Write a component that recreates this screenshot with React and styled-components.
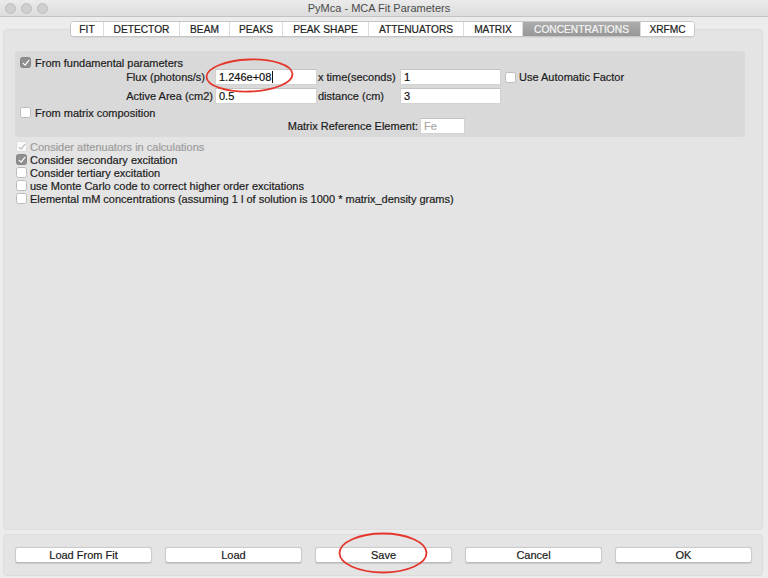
import React from "react";
import styled, { createGlobalStyle } from "styled-components";

const Global = createGlobalStyle`
  html, body { margin: 0; padding: 0; background: #ececec; }
  body {
    font-family: "Liberation Sans", Arial, sans-serif;
    font-size: 11px;
    color: #1c1c1c;
    -webkit-text-stroke: 0.2px currentColor;
  }
  * { box-sizing: border-box; }
`;

const Window = styled.div`
  position: relative;
  width: 768px;
  height: 578px;
  background: #ececec;
  display: flex;
  flex-direction: column;
  overflow: hidden;
`;

const TitleBar = styled.div`
  height: 17px;
  flex: none;
  display: flex;
  align-items: center;
  position: relative;
  background: linear-gradient(#ebebeb, #dcdcdc);
  border-bottom: 1px solid #c4c4c4;
`;

const Lights = styled.div`
  display: flex;
  gap: 5px;
  padding-left: 5px;
`;

const Light = styled.span`
  width: 11px;
  height: 11px;
  border-radius: 50%;
  background: #cfcfcf;
  border: 1px solid #bdbdbd;
`;

const Title = styled.div`
  flex: 1;
  text-align: center;
  color: #4a4a4a;
  font-size: 11px;
  margin-right: 58px;
  -webkit-text-stroke: 0;
`;

const Body = styled.div`
  flex: 1;
  display: flex;
  flex-direction: column;
  padding: 4px 5px 2px 3px;
`;

const TabBar = styled.div`
  align-self: flex-start;
  margin-left: 67px;
  display: flex;
  height: 16px;
  border: 1px solid #c6c6c6;
  border-radius: 4px;
  background: #fff;
  overflow: hidden;
  position: relative;
  z-index: 1;
  margin-bottom: -8px;
  box-shadow: 0 1px 1px rgba(0,0,0,0.06);
`;

const Tab = styled.div`
  width: ${p => p.w}px;
  display: flex;
  align-items: center;
  justify-content: center;
  font-size: 10.2px;
  color: ${p => (p.active ? "#f6f6f6" : "#222")};
  background: ${p => (p.active ? "linear-gradient(#acacac, #979797)" : "#fff")};
  border-left: ${p => (p.first ? "none" : "1px solid #dcdcdc")};
`;

const Panel = styled.div`
  height: 501px;
  background: #e4e4e4;
  border: 1px solid #dcdcdc;
  border-radius: 4px;
  padding: 21px 17px 0 11px;
  display: flex;
  flex-direction: column;
`;

const Group = styled.div`
  background: #d9d9d9;
  border-radius: 4px;
  padding: 5px 5px 3px 5px;
  display: flex;
  flex-direction: column;
`;

const CheckRow = styled.label`
  display: flex;
  align-items: center;
  height: 13px;
  gap: ${p => p.gap || 3}px;
  margin-top: ${p => p.mt || 0}px;
  color: ${p => (p.disabled ? "#9d9d9d" : "#1c1c1c")};
  white-space: nowrap;
`;

const Box = styled.span`
  width: 11px;
  height: 11px;
  flex: none;
  border-radius: 2.5px;
  display: flex;
  align-items: center;
  justify-content: center;
  background: ${p => (p.checked && !p.disabled ? "#8f8f8f" : "#fff")};
  border: 1px solid ${p => (p.checked && !p.disabled ? "#878787" : p.disabled ? "#dadada" : "#bcbcbc")};
  opacity: ${p => (p.disabled ? 0.85 : 1)};
`;

const FieldGrid = styled.div`
  display: grid;
  grid-template-columns: 195px 102px 83px 101px auto;
  row-gap: 3px;
  align-items: center;
`;

const Label = styled.div`
  text-align: ${p => p.align || "right"};
  padding-right: ${p => p.pr || 0}px;
  padding-left: ${p => p.pl || 0}px;
  white-space: nowrap;
`;

const Input = styled.div`
  height: 16px;
  width: ${p => p.w || "auto"};
  background: #fff;
  border: 1px solid #d2d2d2;
  border-top-color: #c4c4c4;
  display: flex;
  align-items: center;
  padding-left: 3px;
  color: ${p => (p.placeholder ? "#a8a8a8" : "#111")};
`;

const Caret = styled.span`
  display: inline-block;
  width: 1px;
  height: 12px;
  background: #111;
  margin-left: 1px;
`;

const AutoCell = styled.div`
  padding-left: 4px;
`;

const RefRow = styled.div`
  display: flex;
  align-items: center;
  gap: 2px;
  margin-top: -1px;
`;

const RefLabel = styled.div`
  width: 398px;
  text-align: right;
`;

const OptionList = styled.div`
  display: flex;
  flex-direction: column;
  padding: 3px 0 0 1px;
`;

const ButtonPanel = styled.div`
  margin-top: 4px;
  height: 42px;
  background: #e4e4e4;
  border: 1px solid #dcdcdc;
  border-radius: 4px;
  display: grid;
  grid-template-columns: repeat(5, 137px);
  column-gap: 13px;
  align-items: center;
  padding: 0 11px;
`;

const Button = styled.div`
  height: 16px;
  background: #fff;
  border: 1px solid #cbcbcb;
  border-bottom-color: #bcbcbc;
  border-radius: 3px;
  display: flex;
  align-items: center;
  justify-content: center;
  color: #1a1a1a;
  box-shadow: 0 0.5px 1px rgba(0,0,0,0.12);
`;

const Annotation = styled.svg`
  position: absolute;
  left: 0;
  top: 0;
  pointer-events: none;
`;

const Check = ({ checked, disabled }) => (
  <Box checked={checked} disabled={disabled}>
    {checked && (
      <svg width="8" height="8" viewBox="0 0 8 8">
        <path
          d="M1.2 4.3 L3.1 6.2 L6.9 1.4"
          fill="none"
          stroke={disabled ? "#b5b5b5" : "#fff"}
          strokeWidth="1.2"
          strokeLinecap="round"
          strokeLinejoin="round"
        />
      </svg>
    )}
  </Box>
);

const tabs = [
  ["FIT", 33],
  ["DETECTOR", 76],
  ["BEAM", 50],
  ["PEAKS", 53],
  ["PEAK SHAPE", 86],
  ["ATTENUATORS", 95],
  ["MATRIX", 59],
  ["CONCENTRATIONS", 118],
  ["XRFMC", 54],
];

const options = [
  ["Consider attenuators in calculations", true, true],
  ["Consider secondary excitation", true, false],
  ["Consider tertiary excitation", false, false],
  ["use Monte Carlo code to correct higher order excitations", false, false],
  ["Elemental mM concentrations (assuming 1 l of solution is 1000 * matrix_density grams)", false, false],
];

const buttons = ["Load From Fit", "Load", "Save", "Cancel", "OK"];

export default function App() {
  return (
    <>
      <Global />
      <Window>
        <TitleBar>
          <Lights>
            <Light />
            <Light />
            <Light />
          </Lights>
          <Title>PyMca - MCA Fit Parameters</Title>
        </TitleBar>
        <Body>
          <TabBar>
            {tabs.map(([t, w], i) => (
              <Tab key={t} w={w - (i === 0 ? 1 : 0)} first={i === 0} active={t === "CONCENTRATIONS"}>
                {t}
              </Tab>
            ))}
          </TabBar>
          <Panel>
            <Group>
              <CheckRow gap={4}>
                <Check checked />
                From fundamental parameters
              </CheckRow>
              <FieldGrid>
                <Label pr={10}>Flux (photons/s)</Label>
                <Input>
                  1.246e+08
                  <Caret />
                </Input>
                <Label align="left" pl={1}>x time(seconds)</Label>
                <Input>1</Input>
                <AutoCell>
                  <CheckRow>
                    <Check />
                    Use Automatic Factor
                  </CheckRow>
                </AutoCell>
                <Label pr={2}>Active Area (cm2)</Label>
                <Input>0.5</Input>
                <Label align="left" pl={1}>distance (cm)</Label>
                <Input>3</Input>
                <div />
              </FieldGrid>
              <CheckRow gap={4} mt={2}>
                <Check />
                From matrix composition
              </CheckRow>
              <RefRow>
                <RefLabel>Matrix Reference Element:</RefLabel>
                <Input w="45px" placeholder="true">Fe</Input>
              </RefRow>
            </Group>
            <OptionList>
              {options.map(([t, c, d]) => (
                <CheckRow key={t} disabled={d}>
                  <Check checked={c} disabled={d} />
                  {t}
                </CheckRow>
              ))}
            </OptionList>
          </Panel>
          <ButtonPanel>
            {buttons.map(b => (
              <Button key={b}>{b}</Button>
            ))}
          </ButtonPanel>
        </Body>
        <Annotation width="768" height="578" viewBox="0 0 768 578">
          <ellipse cx="249.5" cy="75.5" rx="43" ry="16" fill="none" stroke="#e5362c" strokeWidth="1.8" transform="rotate(-2 249.5 75.5)" />
          <ellipse cx="383" cy="553" rx="43.5" ry="19.5" fill="none" stroke="#e5362c" strokeWidth="1.8" />
        </Annotation>
      </Window>
    </>
  );
}
